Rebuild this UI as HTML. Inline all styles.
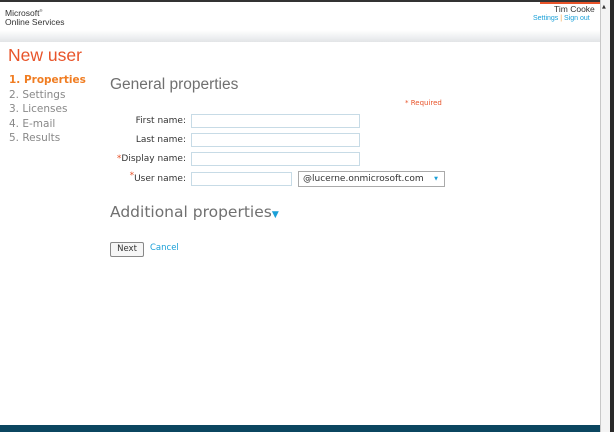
<!DOCTYPE html>
<html><head><meta charset="utf-8"><style>
*{margin:0;padding:0;box-sizing:border-box}
body{width:614px;height:432px;overflow:hidden;background:#fff;font-family:"DejaVu Sans","Liberation Sans",sans-serif;position:relative}
.abs{position:absolute}
.topb{left:0;top:0;width:614px;height:2px;background:#333}
.hdr{left:0;top:2px;width:600px;height:40px;background:linear-gradient(#fff 0,#fff 28px,#eceef0 36px,#e2e4e6 40px)}
.sb{left:600px;top:0;width:14px;height:432px;background:#f4f4f4;border-left:1px solid #c8c8c8}
.sbd{left:610px;top:0;width:4px;height:432px;background:#2a2a2a}
.ft{left:0;top:425px;width:600px;height:7px;background:#0b4660}
.lbl{font-size:9px;color:#333;text-align:right;width:80px}
.inp{height:14px;border:1px solid #c7dbe6;background:#fff}
.req{color:#e8542a}
</style></head><body>
<div class="abs topb"></div>
<div class="abs hdr"></div>
<div class="abs" style="left:540px;top:2px;width:60px;height:2px;background:#e8542a"></div>
<div class="abs" style="left:5px;top:6px;font-size:8.5px;line-height:9.5px;color:#333;font-family:'Liberation Sans',sans-serif">Microsoft<sup style="font-size:4px">®</sup><br>Online Services</div>
<div class="abs" style="left:554px;top:4px;font-size:8.5px;color:#333;font-family:'Liberation Sans',sans-serif">Tim Cooke</div>
<div class="abs" style="left:533px;top:15px;font-size:7px;color:#1aa0d8;font-family:'Liberation Sans',sans-serif">Settings <span style="color:#f0a040">|</span> Sign out</div>
<div class="abs sb"></div><div class="abs sbd"></div>
<div class="abs" style="left:602px;top:4px;font-size:5px;color:#333">▲</div>
<div class="abs" style="left:8px;top:45px;font-size:17.5px;color:#e8542a;font-family:'Liberation Sans',sans-serif">New user</div>
<div class="abs" style="left:9px;top:73px;font-size:10.5px;line-height:14.5px;color:#888">
<div style="color:#f07d22;font-weight:bold">1. Properties</div><div>2. Settings</div><div>3. Licenses</div><div>4. E-mail</div><div>5. Results</div></div>
<div class="abs" style="left:110px;top:76px;font-size:15.5px;color:#707070;font-family:'Liberation Sans',sans-serif">General properties</div>
<div class="abs" style="left:405px;top:99px;font-size:7px;color:#e8542a">* Required</div>
<div class="abs lbl" style="left:106px;top:116px">First name:</div><div class="abs inp" style="left:191px;top:114px;width:169px"></div>
<div class="abs lbl" style="left:106px;top:135px">Last name:</div><div class="abs inp" style="left:191px;top:133px;width:169px"></div>
<div class="abs lbl" style="left:106px;top:154px"><span class="req">*</span>Display name:</div><div class="abs inp" style="left:191px;top:152px;width:169px"></div>
<div class="abs lbl" style="left:106px;top:174px"><span class="req" style="position:relative;top:-3px">*</span>User name:</div><div class="abs inp" style="left:191px;top:172px;width:101px"></div>
<div class="abs" style="left:298px;top:171px;width:147px;height:16px;border:1px solid #aaa;background:#fff;font-size:9px;color:#333;padding:2px 4px">@lucerne.onmicrosoft.com<span style="position:absolute;right:6px;top:4px;color:#1aa0d8;font-size:5px">▼</span></div>
<div class="abs" style="left:110px;top:203px;font-size:15.5px;color:#707070">Additional properties<span style="color:#1aa0d8;font-size:9px">▼</span></div>
<div class="abs" style="left:110px;top:242px;width:34px;height:15px;border:1px solid #888;border-radius:2px;background:#f6f6f6;font-size:8.5px;color:#333;text-align:center;line-height:13px">Next</div>
<div class="abs" style="left:150px;top:243px;font-size:8.5px;color:#1aa0d8">Cancel</div>
<div class="abs ft"></div>
</body></html>
